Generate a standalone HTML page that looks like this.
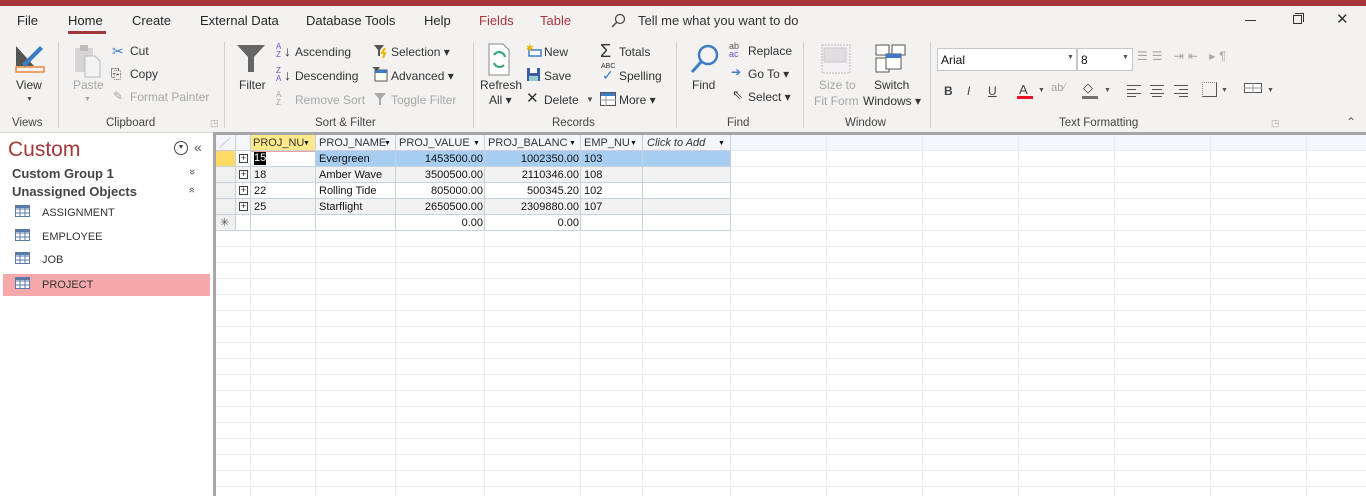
<!DOCTYPE html>
<html><head><meta charset="utf-8"><style>
*{box-sizing:border-box;margin:0;padding:0}
body{width:1366px;height:496px;overflow:hidden;background:#fff;font-family:"Liberation Sans",sans-serif;position:relative;color:#262626}
.a{position:absolute;white-space:nowrap}
.t{font-size:13px;color:#262626}
.s{font-size:12px;color:#333}
.g{color:#a6a6a6}
.lbl{font-size:11.5px;color:#444;top:117px}
.sep{position:absolute;top:42px;width:1px;height:86px;background:#d2d0ce}
.cell{position:absolute;font-size:11px;color:#111;height:16px;line-height:16px;font-family:"Liberation Sans",sans-serif}
</style></head><body>
<div class="a" style="left:0;top:0;width:1366px;height:6px;background:#a4373a"></div>
<div class="a" style="left:0;top:6px;width:1366px;height:127px;background:#f3f2f1"></div>
<!-- tabs -->
<div class="a t" style="left:17px;top:13px">File</div>
<div class="a t" style="left:68px;top:13px;color:#222">Home</div>
<div class="a" style="left:68px;top:31px;width:38px;height:3px;background:#a4373a"></div>
<div class="a t" style="left:132px;top:13px">Create</div>
<div class="a t" style="left:200px;top:13px">External Data</div>
<div class="a t" style="left:306px;top:13px">Database Tools</div>
<div class="a t" style="left:424px;top:13px">Help</div>
<div class="a t" style="left:479px;top:13px;color:#a4373a">Fields</div>
<div class="a t" style="left:540px;top:13px;color:#a4373a">Table</div>
<svg class="a" style="left:610px;top:13px" width="16" height="16"><circle cx="10" cy="6" r="4.5" fill="none" stroke="#444" stroke-width="1.2"/><line x1="7" y1="9" x2="2" y2="14" stroke="#444" stroke-width="1.4"/></svg>
<div class="a t" style="left:638px;top:13px;color:#333">Tell me what you want to do</div>
<div class="a" style="left:1245px;top:20px;width:11px;height:1px;background:#333"></div>
<div class="a" style="left:1293px;top:15px;width:9px;height:9px;border:1px solid #333"></div>
<div class="a" style="left:1295px;top:13px;width:9px;height:9px;border-top:1px solid #333;border-right:1px solid #333"></div>
<div class="a" style="left:1336px;top:10px;font-size:15px;color:#333">✕</div>
<!-- Views -->
<svg class="a" style="left:14px;top:42px" width="32" height="32"><path d="M2 4 L2 24 L20 24 Z" fill="#555"/><path d="M8 22 L26 4 L29 7 L11 25 Z" fill="#3c7cc4"/><rect x="2" y="25" width="28" height="5" fill="none" stroke="#e87722" stroke-width="1.3"/></svg>
<div class="a s" style="left:16px;top:78px">View</div>
<div class="a" style="left:26px;top:96px;font-size:7px;color:#555">▼</div>
<div class="a lbl" style="left:12px">Views</div>
<div class="sep" style="left:58px"></div>
<!-- clipboard -->
<svg class="a" style="left:73px;top:44px" width="30" height="34"><rect x="2" y="4" width="18" height="24" fill="#d6d4d4"/><rect x="7" y="1" width="8" height="6" fill="#bdbbbb"/><path d="M12 12 L22 12 L27 17 L27 33 L12 33 Z" fill="#f4f3f3" stroke="#bbb"/></svg>
<div class="a s g" style="left:73px;top:78px">Paste</div>
<div class="a g" style="left:84px;top:96px;font-size:7px">▼</div>
<div class="a s" style="left:112px;top:43px;font-size:14px;color:#3c7cc4">✂</div>
<div class="a s" style="left:130px;top:44px">Cut</div>
<div class="a s" style="left:111px;top:66px;font-size:13px">⎘</div>
<div class="a s" style="left:130px;top:67px">Copy</div>
<div class="a s g" style="left:113px;top:89px">✎</div>
<div class="a s g" style="left:130px;top:90px">Format Painter</div>
<div class="a lbl" style="left:106px">Clipboard</div>
<div class="a g" style="left:210px;top:118px;font-size:9px">◳</div>
<div class="sep" style="left:224px"></div>
<!-- sort filter -->
<svg class="a" style="left:236px;top:44px" width="30" height="30"><path d="M1 1 L29 1 L18 13 L18 28 L12 28 L12 13 Z" fill="#666"/></svg>
<div class="a s" style="left:239px;top:78px">Filter</div>
<div class="a" style="left:276px;top:43px;font-size:8px;line-height:8px;color:#7a4cc4">A<br>Z</div>
<div class="a s" style="left:284px;top:43px;font-size:14px">↓</div>
<div class="a s" style="left:295px;top:45px">Ascending</div>
<div class="a" style="left:276px;top:67px;font-size:8px;line-height:8px;color:#7a4cc4">Z<br>A</div>
<div class="a s" style="left:284px;top:67px;font-size:14px">↓</div>
<div class="a s" style="left:295px;top:69px">Descending</div>
<div class="a g" style="left:276px;top:91px;font-size:8px;line-height:8px">A<br>Z</div>
<div class="a s g" style="left:295px;top:93px">Remove Sort</div>
<svg class="a" style="left:373px;top:44px" width="16" height="14"><path d="M1 1 L11 1 L7 6 L7 12 L5 12 L5 6 Z" fill="#555"/><path d="M12 4 L9 9 L12 9 L10 14" stroke="#f0b400" stroke-width="2" fill="none"/></svg>
<div class="a s" style="left:391px;top:45px">Selection ▾</div>
<svg class="a" style="left:372px;top:67px" width="16" height="16"><rect x="3" y="3" width="12" height="11" fill="#fff" stroke="#555"/><rect x="3" y="3" width="12" height="3" fill="#3c7cc4"/><path d="M0 0 L8 0 L5 4 Z" fill="#555"/></svg>
<div class="a s" style="left:391px;top:69px">Advanced ▾</div>
<svg class="a" style="left:373px;top:92px" width="14" height="14"><path d="M1 1 L13 1 L8 7 L8 13 L6 13 L6 7 Z" fill="#aaa"/></svg>
<div class="a s g" style="left:391px;top:93px">Toggle Filter</div>
<div class="a lbl" style="left:315px">Sort &amp; Filter</div>
<div class="sep" style="left:473px"></div>
<!-- records -->
<svg class="a" style="left:487px;top:43px" width="26" height="34"><path d="M2 1 L16 1 L22 7 L22 32 L2 32 Z" fill="#fff" stroke="#888"/><path d="M7 12 A6 6 0 0 1 18 14 M17 22 A6 6 0 0 1 7 20" fill="none" stroke="#3aa57a" stroke-width="2.2"/></svg>
<div class="a s" style="left:480px;top:78px">Refresh</div>
<div class="a s" style="left:489px;top:93px">All ▾</div>
<svg class="a" style="left:526px;top:44px" width="16" height="14"><rect x="3" y="6" width="12" height="6" fill="#fff" stroke="#3c7cc4" stroke-width="1.5"/><text x="0" y="7" font-size="9" fill="#f0b400">✱</text></svg>
<div class="a s" style="left:544px;top:45px">New</div>
<svg class="a" style="left:526px;top:67px" width="15" height="15"><rect x="1" y="1" width="13" height="13" fill="#3c5ca4"/><rect x="4" y="1" width="7" height="5" fill="#fff"/><rect x="3" y="9" width="9" height="5" fill="#9cc"/></svg>
<div class="a s" style="left:544px;top:69px">Save</div>
<div class="a s" style="left:526px;top:89px;font-size:15px">✕</div>
<div class="a s" style="left:544px;top:93px">Delete</div>
<div class="a" style="left:586px;top:95px;font-size:8px;color:#555">▼</div>
<div class="a" style="left:600px;top:41px;font-size:18px;color:#333">Σ</div>
<div class="a s" style="left:619px;top:45px">Totals</div>
<div class="a" style="left:601px;top:63px;font-size:7px;color:#333">ABC</div>
<div class="a" style="left:602px;top:67px;font-size:14px;color:#3c7cc4">✓</div>
<div class="a s" style="left:619px;top:69px">Spelling</div>
<svg class="a" style="left:600px;top:92px" width="16" height="14"><rect x="0.5" y="0.5" width="15" height="13" fill="#fff" stroke="#555"/><rect x="1" y="1" width="14" height="3" fill="#3c7cc4"/><line x1="0" y1="8" x2="16" y2="8" stroke="#999"/><line x1="6" y1="4" x2="6" y2="14" stroke="#999"/></svg>
<div class="a s" style="left:619px;top:93px">More ▾</div>
<div class="a lbl" style="left:552px">Records</div>
<div class="sep" style="left:676px"></div>
<!-- find -->
<svg class="a" style="left:690px;top:44px" width="30" height="30"><circle cx="18" cy="11" r="9" fill="none" stroke="#3c7cc4" stroke-width="2.5"/><line x1="11" y1="18" x2="2" y2="28" stroke="#3c7cc4" stroke-width="3"/></svg>
<div class="a s" style="left:692px;top:78px">Find</div>
<div class="a" style="left:729px;top:42px;font-size:9px;line-height:8px;color:#555">ab<br><span style="color:#7a4cc4">ac</span></div>
<div class="a s" style="left:748px;top:44px">Replace</div>
<div class="a" style="left:731px;top:65px;font-size:12px;color:#3c7cc4">➔</div>
<div class="a s" style="left:748px;top:67px">Go To ▾</div>
<div class="a" style="left:732px;top:87px;font-size:13px;color:#444">⇖</div>
<div class="a s" style="left:748px;top:90px">Select ▾</div>
<div class="a lbl" style="left:727px">Find</div>
<div class="sep" style="left:803px"></div>
<!-- window -->
<svg class="a" style="left:821px;top:44px" width="30" height="30"><rect x="1" y="1" width="28" height="28" fill="#f3f0f3" stroke="#bbb" stroke-dasharray="2 1"/><rect x="3" y="4" width="22" height="14" fill="#e0dde0" stroke="#ccc"/></svg>
<div class="a s g" style="left:819px;top:78px">Size to</div>
<div class="a s g" style="left:814px;top:94px">Fit Form</div>
<svg class="a" style="left:875px;top:44px" width="32" height="30"><rect x="1" y="1" width="13" height="10" fill="#fff" stroke="#555"/><rect x="17" y="1" width="13" height="10" fill="#fff" stroke="#555"/><rect x="1" y="14" width="13" height="14" fill="#fff" stroke="#555"/><rect x="11" y="10" width="15" height="15" fill="#fff" stroke="#555"/><rect x="11" y="10" width="15" height="4" fill="#3c7cc4"/></svg>
<div class="a s" style="left:874px;top:78px">Switch</div>
<div class="a s" style="left:863px;top:94px">Windows ▾</div>
<div class="a lbl" style="left:845px">Window</div>
<div class="sep" style="left:930px"></div>
<!-- text formatting -->
<div class="a" style="left:937px;top:48px;width:140px;height:23px;background:#fff;border:1px solid #c8c6c4;font-size:12px;padding:4px 3px;color:#111">Arial</div>
<div class="a" style="left:1067px;top:54px;font-size:7px;color:#555">▼</div>
<div class="a" style="left:1077px;top:48px;width:56px;height:23px;background:#fff;border:1px solid #c8c6c4;font-size:12px;padding:4px 3px;color:#111">8</div>
<div class="a" style="left:1122px;top:54px;font-size:7px;color:#555">▼</div>
<div class="a g" style="left:1137px;top:49px;font-size:12px;letter-spacing:4px">☰☰ ⇥⇤ ▸¶</div>
<div class="a" style="left:944px;top:84px;font-size:12px;font-weight:bold;color:#444">B</div>
<div class="a" style="left:967px;top:84px;font-size:12px;font-style:italic;color:#444">I</div>
<div class="a" style="left:988px;top:84px;font-size:12px;text-decoration:underline;color:#444">U</div>
<div class="a" style="left:1019px;top:82px;font-size:13px;color:#444">A</div>
<div class="a" style="left:1017px;top:96px;width:16px;height:3px;background:#e81123"></div>
<div class="a" style="left:1038px;top:87px;font-size:7px;color:#555">▼</div>
<div class="a g" style="left:1051px;top:82px;font-size:11px">ab⁄</div>
<div class="a" style="left:1083px;top:80px;font-size:13px;color:#444">◇</div>
<div class="a" style="left:1082px;top:96px;width:16px;height:3px;background:#707070"></div>
<div class="a" style="left:1104px;top:87px;font-size:7px;color:#555">▼</div>
<svg class="a" style="left:1127px;top:83px" width="66" height="14"><g stroke="#555" stroke-width="1"><path d="M0 2.5h14M0 6.5h9M0 10.5h14M0 13.5h9"/><path d="M23 2.5h14M25 6.5h10M23 10.5h14M25 13.5h10"/><path d="M47 2.5h14M52 6.5h9M47 10.5h14M52 13.5h9"/></g></svg>
<div class="a" style="left:1202px;top:82px;width:15px;height:15px;border-right:1px solid #555;border-bottom:1px solid #555;border-left:1px dotted #888;border-top:1px dotted #888"></div>
<div class="a" style="left:1221px;top:87px;font-size:7px;color:#555">▼</div>
<svg class="a" style="left:1244px;top:83px" width="18" height="12"><rect x="0.5" y="0.5" width="17" height="9" fill="#fff" stroke="#555"/><line x1="0" y1="5" x2="18" y2="5" stroke="#999"/><line x1="9" y1="0" x2="9" y2="10" stroke="#999"/></svg>
<div class="a" style="left:1267px;top:87px;font-size:7px;color:#555">▼</div>
<div class="a lbl" style="left:1059px">Text Formatting</div>
<div class="a g" style="left:1271px;top:118px;font-size:9px">◳</div>
<div class="a" style="left:1346px;top:115px;font-size:12px;color:#555">⌃</div>
<!-- divider below ribbon -->
<div class="a" style="left:0;top:132px;width:1366px;height:1px;background:#d8d6d4"></div>
<div class="a" style="left:213px;top:132px;width:1153px;height:3px;background:#a6a6a6"></div>
<!-- nav pane -->
<div class="a" style="left:8px;top:138px;font-size:21px;color:#a4373a">Custom</div>
<div class="a" style="left:174px;top:141px;width:14px;height:14px;border:1.3px solid #444;border-radius:50%;font-size:7px;text-align:center;line-height:12px;color:#444">▼</div>
<div class="a" style="left:194px;top:139px;font-size:14px;color:#555">«</div>
<div class="a" style="left:12px;top:166px;font-size:13px;font-weight:bold;color:#444">Custom Group 1</div>
<div class="a" style="left:189px;top:166px;font-size:11px;color:#555;transform:rotate(90deg)">»</div>
<div class="a" style="left:12px;top:184px;font-size:13px;font-weight:bold;color:#444">Unassigned Objects</div>
<div class="a" style="left:189px;top:184px;font-size:11px;color:#555;transform:rotate(-90deg)">»</div>
<div class="a" style="left:3px;top:274px;width:207px;height:22px;background:#f6a8aa"></div>
<svg class="a" style="left:15px;top:205px" width="16" height="90">
<g fill="#fff" stroke="#5a7ba8"><rect x="0.5" y="0.5" width="14" height="11"/><rect x="0.5" y="24.5" width="14" height="11"/><rect x="0.5" y="47.5" width="14" height="11"/><rect x="0.5" y="72.5" width="14" height="11"/></g>
<g stroke="#5a7ba8"><path d="M0 4h15M0 8h15M5 1v11M10 1v11M0 28h15M0 32h15M5 25v11M10 25v11M0 51h15M0 55h15M5 48v11M10 48v11M0 76h15M0 80h15M5 73v11M10 73v11"/></g>
<g fill="#5a7ba8"><rect x="0" y="0" width="15" height="3"/><rect x="0" y="24" width="15" height="3"/><rect x="0" y="47" width="15" height="3"/><rect x="0" y="72" width="15" height="3"/></g>
</svg>
<div class="a" style="left:42px;top:207px;font-size:11px;color:#333">ASSIGNMENT</div>
<div class="a" style="left:42px;top:231px;font-size:11px;color:#333">EMPLOYEE</div>
<div class="a" style="left:42px;top:254px;font-size:11px;color:#333">JOB</div>
<div class="a" style="left:42px;top:279px;font-size:11px;color:#333">PROJECT</div>
<div class="a" style="left:213px;top:133px;width:3px;height:363px;background:#a6a6a6"></div>
<!-- grid background lines -->
<svg class="a" style="left:216px;top:135px" width="1150" height="361">
<rect x="514" y="0" width="636" height="16" fill="#f4f6fc"/>
<g stroke="#eceef3" stroke-width="1">
<path d="M0 111.5H1150M0 127.5H1150M0 143.5H1150M0 159.5H1150M0 175.5H1150M0 191.5H1150M0 207.5H1150M0 223.5H1150M0 239.5H1150M0 255.5H1150M0 271.5H1150M0 287.5H1150M0 303.5H1150M0 319.5H1150M0 335.5H1150M0 351.5H1150"/>
<path d="M514 15.5H1150M514 31.5H1150M514 47.5H1150M514 63.5H1150M514 79.5H1150M0 95.5H1150"/>
<path d="M34.5 96V361M99.5 96V361M179.5 96V361M268.5 96V361M364.5 96V361M426.5 96V361M514.5 96V361M610.5 0V361M706.5 0V361M802.5 0V361M898.5 0V361M994.5 0V361M1090.5 0V361"/>
</g>
</svg>
<!-- header -->
<div class="a" style="left:216px;top:135px;width:514px;height:16px;background:#f4f6fc;border-bottom:1px solid #c8d0dc"></div>
<div class="a" style="left:250px;top:135px;width:65px;height:16px;background:#ffe98a"></div>
<div class="a" style="left:216px;top:151px;width:19px;height:80px;background:#f0f0f0"></div>
<div class="a" style="left:216px;top:151px;width:19px;height:16px;background:#ffd966"></div>
<div class="a" style="left:235px;top:151px;width:495px;height:80px;background:#fff"></div>
<div class="a" style="left:250px;top:151px;width:480px;height:16px;background:#a7cdf0"></div>
<div class="a" style="left:250px;top:151px;width:66px;height:16px;background:#fff;border:1px solid #f4a3a3"></div>
<div class="a" style="left:235px;top:167px;width:495px;height:16px;background:#f2f2f2"></div>
<div class="a" style="left:235px;top:199px;width:495px;height:16px;background:#f2f2f2"></div>
<!-- grid lines for table -->
<svg class="a" style="left:216px;top:135px" width="516" height="97">
<g stroke="#c8d0dc" stroke-width="1"><path d="M34.5 0V96M99.5 0V96M179.5 0V96M268.5 0V96M364.5 0V96M426.5 0V96M514.5 0V96M0 15.5H515M0 31.5H515M0 47.5H515M0 63.5H515M0 79.5H515M0 95.5H515M19.5 0V96"/></g>
<path d="M3 13 L14 3" stroke="#ccc"/>
</svg>
<div class="cell" style="left:253px;top:135px;color:#333">PROJ_NU</div><div class="cell" style="left:303px;top:136px;font-size:7px">▼</div>
<div class="cell" style="left:319px;top:135px;color:#333">PROJ_NAME</div><div class="cell" style="left:384px;top:136px;font-size:7px">▼</div>
<div class="cell" style="left:399px;top:135px;color:#333">PROJ_VALUE</div><div class="cell" style="left:473px;top:136px;font-size:7px">▼</div>
<div class="cell" style="left:488px;top:135px;color:#333">PROJ_BALANC</div><div class="cell" style="left:569px;top:136px;font-size:7px">▼</div>
<div class="cell" style="left:584px;top:135px;color:#333">EMP_NU</div><div class="cell" style="left:630px;top:136px;font-size:7px">▼</div>
<div class="cell" style="left:647px;top:135px;color:#333;font-style:italic">Click to Add</div><div class="cell" style="left:718px;top:136px;font-size:7px">▼</div>
<div class="a" style="left:239px;top:154px;width:9px;height:9px;border:1px solid #444;font-size:9px;line-height:7px;text-align:center;background:#fff">+</div>
<div class="a" style="left:239px;top:170px;width:9px;height:9px;border:1px solid #444;font-size:9px;line-height:7px;text-align:center;background:#fff">+</div>
<div class="a" style="left:239px;top:186px;width:9px;height:9px;border:1px solid #444;font-size:9px;line-height:7px;text-align:center;background:#fff">+</div>
<div class="a" style="left:239px;top:202px;width:9px;height:9px;border:1px solid #444;font-size:9px;line-height:7px;text-align:center;background:#fff">+</div>
<div class="cell" style="left:220px;top:215px;color:#555">✳</div>
<div class="cell" style="left:254px;top:152px;height:13px;line-height:13px;background:#000;color:#fff">15</div>
<div class="cell" style="left:254px;top:167px">18</div>
<div class="cell" style="left:254px;top:183px">22</div>
<div class="cell" style="left:254px;top:199px">25</div>
<div class="cell" style="left:319px;top:151px">Evergreen</div>
<div class="cell" style="left:319px;top:167px">Amber Wave</div>
<div class="cell" style="left:319px;top:183px">Rolling Tide</div>
<div class="cell" style="left:319px;top:199px">Starflight</div>
<div class="cell" style="left:396px;top:151px;width:87px;text-align:right">1453500.00</div>
<div class="cell" style="left:396px;top:167px;width:87px;text-align:right">3500500.00</div>
<div class="cell" style="left:396px;top:183px;width:87px;text-align:right">805000.00</div>
<div class="cell" style="left:396px;top:199px;width:87px;text-align:right">2650500.00</div>
<div class="cell" style="left:396px;top:215px;width:87px;text-align:right">0.00</div>
<div class="cell" style="left:485px;top:151px;width:94px;text-align:right">1002350.00</div>
<div class="cell" style="left:485px;top:167px;width:94px;text-align:right">2110346.00</div>
<div class="cell" style="left:485px;top:183px;width:94px;text-align:right">500345.20</div>
<div class="cell" style="left:485px;top:199px;width:94px;text-align:right">2309880.00</div>
<div class="cell" style="left:485px;top:215px;width:94px;text-align:right">0.00</div>
<div class="cell" style="left:584px;top:151px">103</div>
<div class="cell" style="left:584px;top:167px">108</div>
<div class="cell" style="left:584px;top:183px">102</div>
<div class="cell" style="left:584px;top:199px">107</div>
</body></html>
